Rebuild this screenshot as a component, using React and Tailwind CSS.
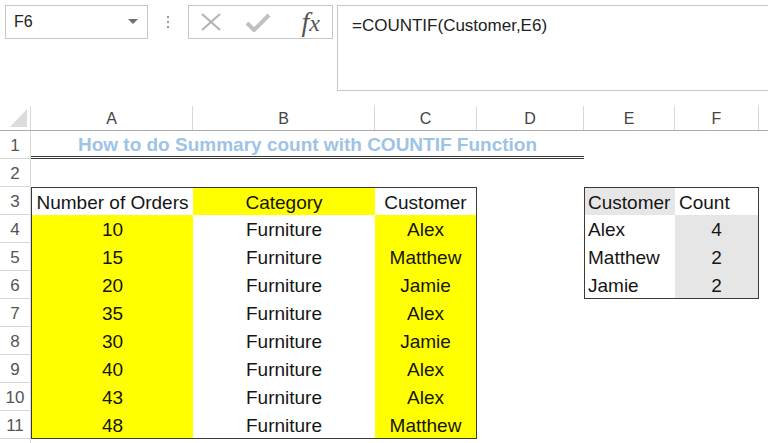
import React from 'react';

const font = { fontFamily: '"Liberation Sans", Arial, sans-serif' };

// column widths: row header, A..G
const W = {
  h: 'w-[31px]',
  A: 'w-[162px]',
  B: 'w-[182px]',
  C: 'w-[102px]',
  D: 'w-[107px]',
  E: 'w-[91px]',
  F: 'w-[84px]',
};

const orders = [
  ['10', 'Furniture', 'Alex'],
  ['15', 'Furniture', 'Matthew'],
  ['20', 'Furniture', 'Jamie'],
  ['35', 'Furniture', 'Alex'],
  ['30', 'Furniture', 'Jamie'],
  ['40', 'Furniture', 'Alex'],
  ['43', 'Furniture', 'Alex'],
  ['48', 'Furniture', 'Matthew'],
];

const summary = [
  ['Alex', '4'],
  ['Matthew', '2'],
  ['Jamie', '2'],
];

function RowNum({ n }) {
  return (
    <div className={`${W.h} shrink-0 h-full flex items-center justify-center pt-[2px] border-r border-b border-[#d8d8d8] text-[17px] text-[#555]`}>
      {n}
    </div>
  );
}

function Cell({ w, className = '', children }) {
  return (
    <div className={`${w} shrink-0 h-full flex items-center pt-[3px] text-[19px] text-[#151515] whitespace-nowrap overflow-hidden ${className}`}>
      {children}
    </div>
  );
}

function Toolbar() {
  return (
    <div className="h-[106px] relative flex items-start pt-[5px] pl-[5px]">
      {/* name box */}
      <div className="w-[143px] h-[34px] border border-[#c6c6c6] flex items-center justify-between pl-[8px] pr-[9px] text-[16px] text-[#222]">
        <span>F6</span>
        <svg width="10" height="6" viewBox="0 0 10 6"><path d="M0 0h10L5 5z" fill="#6f6f6f" /></svg>
      </div>
      {/* grip dots */}
      <div className="w-[40px] h-[34px] flex flex-col items-center justify-center gap-[3px]">
        <span className="w-[2px] h-[2px] bg-[#9a9a9a]" />
        <span className="w-[2px] h-[2px] bg-[#9a9a9a]" />
        <span className="w-[2px] h-[2px] bg-[#9a9a9a]" />
      </div>
      {/* cancel / enter / fx */}
      <div className="w-[145px] h-[34px] border border-[#c6c6c6] flex items-center pl-[10px] pr-[12px]">
        <svg width="24" height="20" viewBox="0 0 24 20">
          <path d="M3 2 L21 18 M21 2 L3 18" stroke="#b4b4b4" strokeWidth="2.2" fill="none" />
        </svg>
        <svg className="ml-[22px]" width="26" height="20" viewBox="0 0 26 20">
          <path d="M2 11 L9 18 L24 3" stroke="#c0c0c0" strokeWidth="4" fill="none" strokeLinejoin="round" />
        </svg>
        <span
          className="ml-auto text-[28px] italic leading-none text-[#555]"
          style={{ fontFamily: '"Liberation Serif", "DejaVu Serif", serif' }}
        >
          f<span className="text-[24px]">x</span>
        </span>
      </div>
      {/* formula box */}
      <div className="ml-[4px] flex-1 h-[86px] border-l border-t border-b border-[#c6c6c6] pl-[14px] pt-[7px] text-[17px] text-[#222]">
        =COUNTIF(Customer,E6)
      </div>
    </div>
  );
}

function ColHeader() {
  const cols = [
    [W.A, 'A'],
    [W.B, 'B'],
    [W.C, 'C'],
    [W.D, 'D'],
    [W.E, 'E'],
    [W.F, 'F'],
  ];
  return (
    <div className="h-[25px] flex border-b border-[#ababab]">
      <div className={`${W.h} shrink-0 h-full relative border-r border-[#d8d8d8]`}>
        <svg className="absolute left-[10px] top-[3px]" width="17" height="18" viewBox="0 0 17 18">
          <path d="M17 0 V18 H0 Z" fill="#dcdcdc" />
        </svg>
      </div>
      {cols.map(([w, l]) => (
        <div key={l} className={`${w} shrink-0 h-full flex items-center justify-center pt-[2px] border-r border-[#d8d8d8] text-[16px] text-[#444]`}>
          {l}
        </div>
      ))}
      <div className="flex-1" />
    </div>
  );
}

export default function App() {
  return (
    <div className="w-[768px] h-[443px] overflow-hidden bg-white" style={font}>
      <Toolbar />
      <ColHeader />

      {/* row 1: title */}
      <div className="flex h-[28px]">
        <RowNum n={1} />
        <div className="w-[553px] shrink-0 h-full flex items-center justify-center pt-[4px] border-b-[3px] border-double border-[#3a3a3a] text-[19px] font-bold text-[#9dc3e6]">
          How to do Summary count with COUNTIF Function
        </div>
      </div>

      {/* row 2 */}
      <div className="flex h-[28px]">
        <RowNum n={2} />
      </div>

      {/* row 3: headers */}
      <div className="flex h-[28px]">
        <RowNum n={3} />
        <Cell w={W.A} className="justify-center border-l border-t border-[#3a3a3a]">Number of Orders</Cell>
        <Cell w={W.B} className="justify-center bg-[#ffff00] border-t border-[#3a3a3a]">Category</Cell>
        <Cell w={W.C} className="justify-center border-t border-r border-[#3a3a3a]">Customer</Cell>
        <Cell w={W.D} />
        <Cell w={W.E} className="pl-[3px] bg-[#e7e6e6] border-l border-t border-[#3a3a3a]">Customer</Cell>
        <Cell w={W.F} className="pl-[4px] border-t border-r border-[#3a3a3a]">Count</Cell>
      </div>

      {orders.map(([n, cat, cust], i) => {
        const last = i === orders.length - 1;
        const s = summary[i];
        const lastS = i === summary.length - 1;
        return (
          <div key={i} className="flex h-[28px]">
            <RowNum n={i + 4} />
            <Cell w={W.A} className={`justify-center bg-[#ffff00] border-l border-[#3a3a3a] ${last ? 'border-b' : ''}`}>{n}</Cell>
            <Cell w={W.B} className={`justify-center border-[#3a3a3a] ${last ? 'border-b' : ''}`}>{cat}</Cell>
            <Cell w={W.C} className={`justify-center bg-[#ffff00] border-r border-[#3a3a3a] ${last ? 'border-b' : ''}`}>{cust}</Cell>
            <Cell w={W.D} />
            {s ? (
              <>
                <Cell w={W.E} className={`pl-[3px] border-l border-[#3a3a3a] ${lastS ? 'border-b' : ''}`}>{s[0]}</Cell>
                <Cell w={W.F} className={`justify-center bg-[#e7e6e6] border-r border-[#3a3a3a] ${lastS ? 'border-b' : ''}`}>{s[1]}</Cell>
              </>
            ) : null}
          </div>
        );
      })}

      {/* row 12, only its top edge is in view */}
      <div className="flex h-[28px]">
        <div className={`${W.h} shrink-0 h-full border-r border-[#d8d8d8]`} />
      </div>
    </div>
  );
}
